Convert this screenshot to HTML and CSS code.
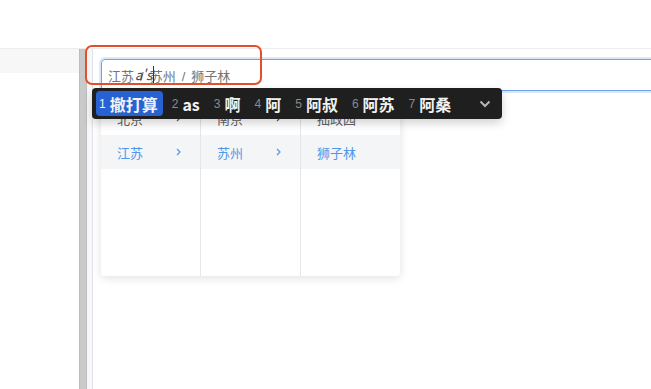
FILE: index.html
```html
<!DOCTYPE html>
<html lang="zh-CN">
<head>
<meta charset="utf-8">
<title>Cascader</title>
<link rel="stylesheet" href="styles.css">
</head>
<body>
<div class="top"></div>
<div class="workspace">
  <div class="side"><div class="side-head"></div></div>
  <div class="splitter"></div>
  <div class="gutter"></div>
  <div class="main">
    <div class="input">
      <span class="placeholder">江苏<span class="sep">/</span>苏州<span class="sep">/</span>狮子林</span>
      <span class="compose"><span class="compose-text">a's</span></span>
      <span class="caret"></span>
    </div>
    <div class="dropdown">
      <div class="col">
        <div class="node">北京<svg class="arrow" viewBox="0 0 5 8"><path d="M1 1l3 3-3 3"/></svg></div>
        <div class="node active">江苏<svg class="arrow" viewBox="0 0 5 8"><path d="M1 1l3 3-3 3"/></svg></div>
      </div>
      <div class="col">
        <div class="node">南京<svg class="arrow" viewBox="0 0 5 8"><path d="M1 1l3 3-3 3"/></svg></div>
        <div class="node active">苏州<svg class="arrow" viewBox="0 0 5 8"><path d="M1 1l3 3-3 3"/></svg></div>
      </div>
      <div class="col last">
        <div class="node">拙政园</div>
        <div class="node active">狮子林</div>
      </div>
    </div>
  </div>
</div>
<div class="ime">
  <div class="cand selected"><span class="num">1</span><span class="word">撤打算</span></div>
  <div class="cand"><span class="num">2</span><span class="word">as</span></div>
  <div class="cand"><span class="num">3</span><span class="word">啊</span></div>
  <div class="cand"><span class="num">4</span><span class="word">阿</span></div>
  <div class="cand"><span class="num">5</span><span class="word">阿叔</span></div>
  <div class="cand"><span class="num">6</span><span class="word">阿苏</span></div>
  <div class="cand"><span class="num">7</span><span class="word">阿桑</span></div>
  <svg class="more" viewBox="0 0 12 8"><path d="M1.5 1.5l4.5 4.5 4.5-4.5"/></svg>
</div>
<div class="annot"></div>
</body>
</html>
```
FILE: styles.css
```css
html, body {
  margin: 0;
  padding: 0;
  background: #fff;
  overflow: hidden;
}
body {
  width: 651px;
  height: 389px;
  position: relative;
  font-family: "Noto Sans CJK SC", "Liberation Sans", sans-serif;
}
.top {
  height: 48px;
  border-bottom: 1px solid #ededed;
}
.workspace {
  display: flex;
  height: 340px;
}
.side {
  width: 79px;
  flex: none;
}
.side-head {
  height: 24px;
  background: #f7f7f7;
}
.splitter {
  width: 6px;
  flex: none;
  background: #cacaca;
  border-left: 1px solid #bdbdbd;
  border-right: 1px solid #bdbdbd;
}
.gutter {
  width: 5px;
  flex: none;
  background: #f8f8f8;
  border-right: 1px solid #e2e2ec;
}
.main {
  flex: 1;
  position: relative;
  padding: 10px 0 0 8px;
}
.input {
  position: relative;
  height: 30px;
  margin-right: -30px;
  border: 1px solid #6ea2e6;
  border-radius: 4px;
  box-shadow: 0 0 0 2px #dce8f8;
  display: flex;
  align-items: center;
  padding-left: 6px;
  font-size: 13px;
  color: #747474;
}
.placeholder {
  white-space: nowrap;
}
.sep {
  margin: 0 6px;
  font-family: "Liberation Sans", sans-serif;
}
.compose {
  position: absolute;
  left: 7px;
  top: 7px;
  width: 44px;
  height: 16px;
  border-bottom: 1px solid #555;
  display: flex;
  justify-content: flex-end;
  align-items: center;
  font-size: 13px;
  color: #444;
  font-style: italic;
}
.compose-text {
  padding-right: 1px;
  line-height: 16px;
}
.caret {
  position: absolute;
  left: 51px;
  top: 6px;
  width: 1px;
  height: 19px;
  background: #333;
}
.dropdown {
  position: absolute;
  left: 8px;
  top: 52px;
  width: 299px;
  height: 175px;
  background: #fff;
  border-radius: 4px;
  box-shadow: 0 2px 10px rgba(0,0,0,0.12);
  display: flex;
  overflow: hidden;
}
.col {
  width: 99px;
  border-right: 1px solid #e6e6e6;
}
.col.last {
  border-right: none;
  flex: 1;
}
.node {
  height: 34px;
  display: flex;
  align-items: center;
  justify-content: space-between;
  padding: 0 19px 0 16px;
  font-size: 13px;
  color: #606266;
}
.node.active {
  background: #f4f5f7;
  color: #4f97ea;
}
.arrow {
  width: 5px;
  height: 8px;
  fill: none;
  stroke: currentColor;
  stroke-width: 1.2;
}
.ime {
  position: absolute;
  left: 92px;
  top: 88px;
  width: 406px;
  height: 31px;
  padding-left: 4px;
  background: #1f1f1f;
  border-radius: 4px;
  box-shadow: 0 4px 10px rgba(0,0,0,0.18);
  display: flex;
  align-items: center;
  gap: 6px;
}
.cand {
  height: 25px;
  display: flex;
  align-items: center;
  padding: 0 5px 0 3px;
  border-radius: 4px;
  color: #f2f2f2;
}
.cand.selected {
  background: #2862d2;
}
.num {
  font-size: 12px;
  color: #8a8a8a;
  margin-right: 4px;
  font-family: "Liberation Sans", sans-serif;
}
.cand.selected .num {
  color: #e8eefb;
}
.word {
  font-size: 16px;
  font-weight: bold;
  line-height: 20px;
}
.more {
  width: 12px;
  height: 8px;
  margin-left: auto;
  margin-right: 11px;
  fill: none;
  stroke: #b5b5b5;
  stroke-width: 2;
}
.annot {
  position: absolute;
  left: 85px;
  top: 45px;
  width: 173px;
  height: 36px;
  border: 2px solid #e2502b;
  border-radius: 7px;
}
```
